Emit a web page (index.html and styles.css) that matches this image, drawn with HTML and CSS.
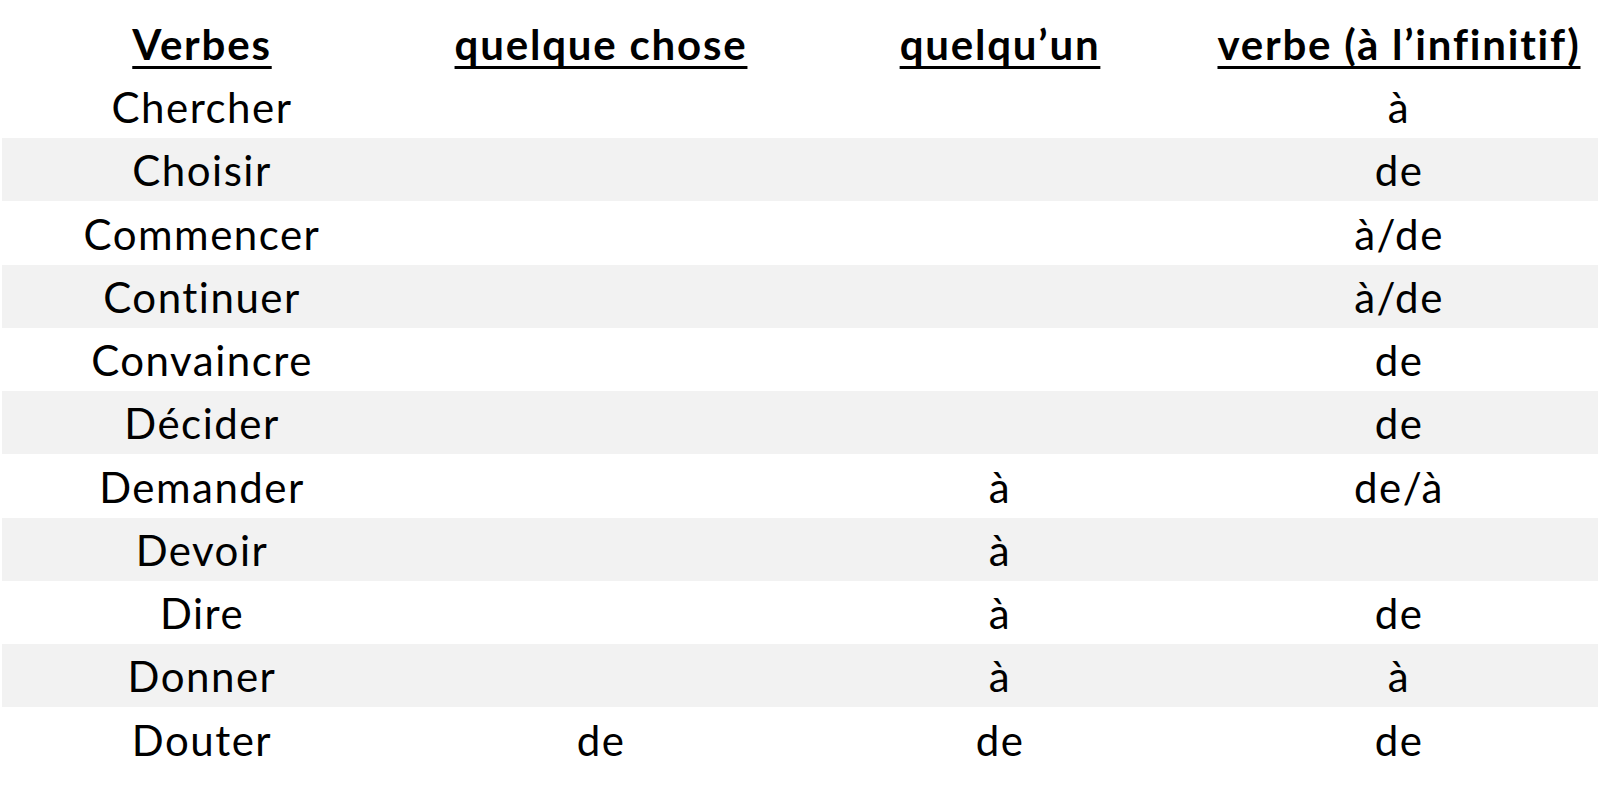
FILE: index.html
```html
<!DOCTYPE html>
<html lang="fr">
<head>
<meta charset="utf-8">
<title>Verbes et prépositions</title>
<link rel="stylesheet" href="styles.css">
</head>
<body>
<table class="verbs">
  <thead>
    <tr>
      <th><span class="u">Verbes</span></th>
      <th><span class="u">quelque chose</span></th>
      <th><span class="u">quelqu’un</span></th>
      <th><span class="u">verbe (à l’infinitif)</span></th>
    </tr>
  </thead>
  <tbody>
    <tr><td>Chercher</td><td></td><td></td><td>à</td></tr>
    <tr><td>Choisir</td><td></td><td></td><td>de</td></tr>
    <tr><td>Commencer</td><td></td><td></td><td>à/de</td></tr>
    <tr><td>Continuer</td><td></td><td></td><td>à/de</td></tr>
    <tr><td>Convaincre</td><td></td><td></td><td>de</td></tr>
    <tr><td>Décider</td><td></td><td></td><td>de</td></tr>
    <tr><td>Demander</td><td></td><td>à</td><td>de/à</td></tr>
    <tr><td>Devoir</td><td></td><td>à</td><td></td></tr>
    <tr><td>Dire</td><td></td><td>à</td><td>de</td></tr>
    <tr><td>Donner</td><td></td><td>à</td><td>à</td></tr>
    <tr><td>Douter</td><td>de</td><td>de</td><td>de</td></tr>
  </tbody>
</table>
</body>
</html>
```

FILE: styles.css
```css
html, body {
  margin: 0;
  padding: 0;
  background: #ffffff;
}

body {
  font-family: "Lato", "Open Sans", sans-serif;
  color: #000000;
  font-variant-ligatures: none;
  font-feature-settings: "liga" 0, "dlig" 0;
}

.verbs {
  border-collapse: collapse;
  border-spacing: 0;
  table-layout: fixed;
  width: 1596px;
  margin: 11.5px 2px 0 2px;
}

.verbs th,
.verbs td {
  width: 25%;
  height: 63.25px;
  padding: 2px 0 0 1px;
  text-align: center;
  vertical-align: middle;
  font-size: 42px;
  letter-spacing: 1.5px;
  line-height: 1.2;
  box-sizing: border-box;
}

.verbs th {
  font-weight: 700;
  letter-spacing: 1.8px;
}

.verbs .u {
  text-decoration: underline;
  text-decoration-thickness: 2.5px;
  text-underline-offset: 6px;
  text-decoration-skip-ink: none;
}

.verbs tbody tr:nth-child(even) td {
  background: #f2f2f2;
}
```
